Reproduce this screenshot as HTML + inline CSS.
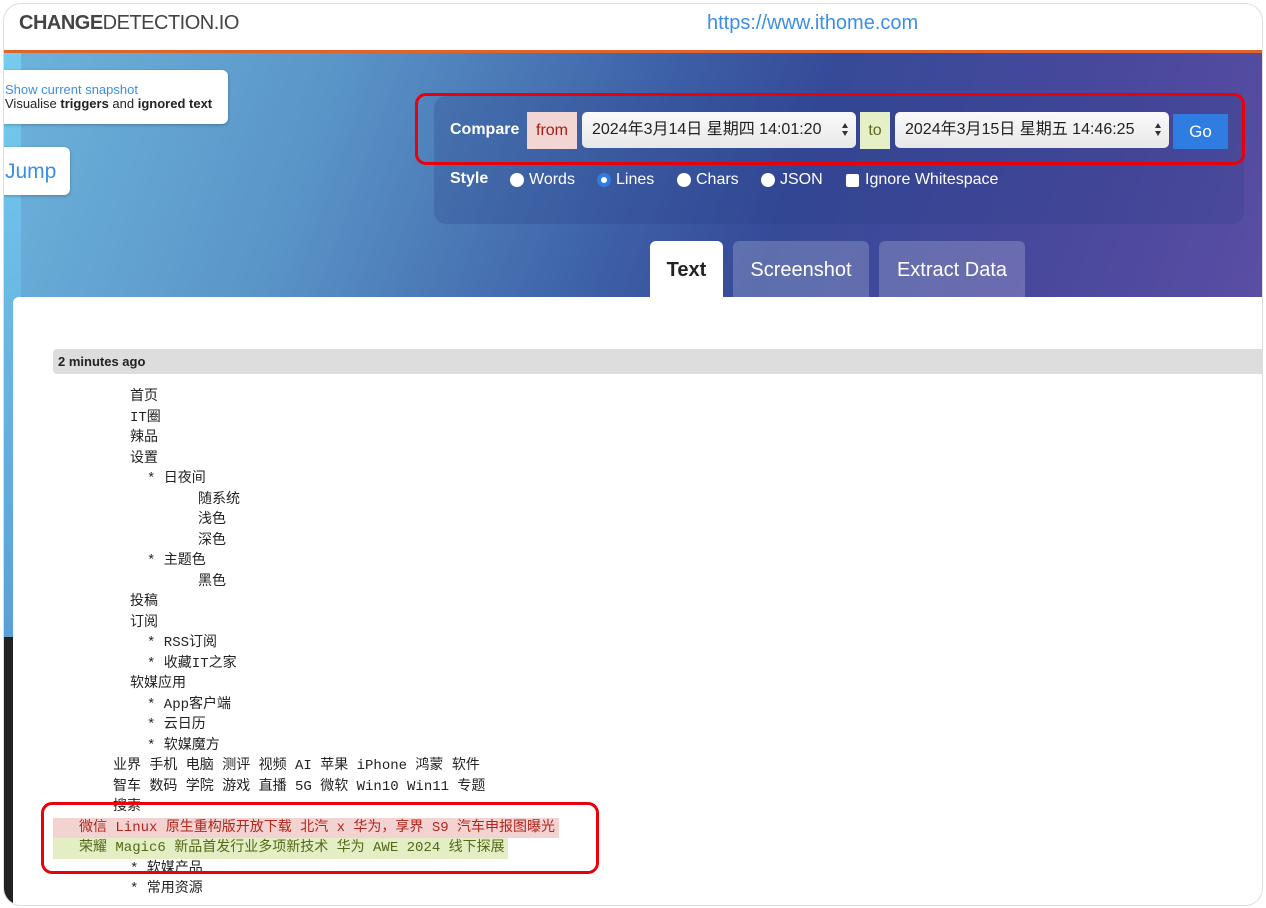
<!DOCTYPE html>
<html><head><meta charset="utf-8"><style>
*{box-sizing:border-box;margin:0;padding:0}
html,body{width:1266px;height:908px;overflow:hidden;background:#fff}
body{font-family:"Liberation Sans","Noto Sans CJK SC",sans-serif;position:relative}
.frame{position:absolute;left:3px;top:3px;width:1260px;height:903px;border-radius:18px;overflow:hidden;border:1px solid #ddd;background:#fff}
.abs{position:absolute}
.hdr{left:0;top:0;width:100%;height:47px;background:#fff}
.orange{left:0;top:46px;width:100%;height:3px;background:#e0632a}
.grad{left:0;top:49px;width:100%;height:260px;background:linear-gradient(110deg,#6db4dc 0%,#5a95c8 25%,#3d5fa6 50%,#364a98 62%,#48489c 82%,#5a4ea4 100%)}
.strip{left:0;top:49px;width:17px;height:585px;background:linear-gradient(180deg,#76cbee,#5aa0d6)}
.dark{left:0;top:633px;width:9px;height:280px;background:#222}
.card{background:#fff;border-radius:6px;box-shadow:0 1px 3px rgba(0,0,0,.25)}
.mono{font-family:"Liberation Mono","Noto Sans CJK SC",monospace;font-size:14px;color:#222;line-height:20.5px}
.mono div{white-space:pre;height:20.5px}
.sel{background:linear-gradient(#fafafa,#e8e8e8);border-radius:5px;height:36px;font-size:16px;color:#222;line-height:36px;padding-left:10px}
.arr{position:absolute;right:8px;top:10px;width:6px;height:16px}
.arr:before{content:"";position:absolute;left:0;top:1px;border-left:3px solid transparent;border-right:3px solid transparent;border-bottom:5px solid #333}
.arr:after{content:"";position:absolute;left:0;top:9px;border-left:3px solid transparent;border-right:3px solid transparent;border-top:5px solid #333}
.rad{position:absolute;width:14px;height:14px;border-radius:50%;background:#fff}
.lbl{position:absolute;font-size:16px;color:#fff}
.ann{border:3px solid #e8000a;border-radius:11px}
</style></head><body>
<div class="frame">
<div class="abs hdr"></div>
<div class="abs" style="left:15px;top:8px;font-size:20px;color:#444;letter-spacing:-0.5px"><b>CHANGE</b>DETECTION.IO</div>
<div class="abs" style="left:703px;top:8px;font-size:20px;color:#3c8ee6">https://www.ithome.com</div>
<div class="abs orange"></div>
<div class="abs grad"></div>
<div class="abs strip"></div>
<div class="abs dark"></div>

<div class="abs card" style="left:-6px;top:66px;width:230px;height:54px"></div>
<div class="abs" style="left:1px;top:78px;font-size:13px;color:#3c8ee6">Show current snapshot</div>
<div class="abs" style="left:1px;top:92px;font-size:13px;color:#222">Visualise <b>triggers</b> and <b>ignored text</b></div>
<div class="abs card" style="left:-6px;top:143px;width:72px;height:48px"></div>
<div class="abs" style="left:1px;top:156px;font-size:21px;color:#3c8ee6">Jump</div>

<div class="abs" style="left:430px;top:92px;width:810px;height:128px;background:rgba(40,60,130,.25);border-radius:12px"></div>
<div class="abs" style="left:446px;top:117px;font-size:16px;font-weight:bold;color:#fff">Compare</div>
<div class="abs" style="left:523px;top:108px;width:50px;height:37px;background:#f2d6d4;color:#a61b12;font-size:16px;line-height:37px;text-align:center">from</div>
<div class="abs sel" style="left:578px;top:108px;width:274px">2024年3月14日 星期四 14:01:20<span class="arr"></span></div>
<div class="abs" style="left:856px;top:108px;width:30px;height:37px;background:#e6f0c6;color:#5a6b1a;font-size:16px;line-height:37px;text-align:center">to</div>
<div class="abs sel" style="left:891px;top:108px;width:274px">2024年3月15日 星期五 14:46:25<span class="arr"></span></div>
<div class="abs" style="left:1169px;top:110px;width:55px;height:35px;background:#2f7de1;color:#fff;font-size:17px;line-height:35px;text-align:center">Go</div>

<div class="lbl" style="left:446px;top:166px;font-weight:bold">Style</div>
<span class="rad" style="left:506px;top:169px"></span><div class="lbl" style="left:525px;top:167px">Words</div>
<span class="rad" style="left:593px;top:169px;background:#fff;border:4px solid #2f7de1"></span><div class="lbl" style="left:612px;top:167px">Lines</div>
<span class="rad" style="left:673px;top:169px"></span><div class="lbl" style="left:692px;top:167px">Chars</div>
<span class="rad" style="left:757px;top:169px"></span><div class="lbl" style="left:776px;top:167px">JSON</div>
<span class="rad" style="left:842px;top:170px;border-radius:2px;width:13px;height:13px"></span><div class="lbl" style="left:861px;top:167px">Ignore Whitespace</div>
<div class="abs ann" style="left:411px;top:89px;width:830px;height:72px"></div>

<div class="abs" style="left:646px;top:237px;width:73px;height:60px;background:#fff;border-radius:6px 6px 0 0;font-size:20px;font-weight:bold;color:#222;text-align:center;line-height:58px">Text</div>
<div class="abs" style="left:729px;top:237px;width:136px;height:60px;background:rgba(255,255,255,.2);border-radius:6px 6px 0 0;font-size:20px;color:#fff;text-align:center;line-height:58px">Screenshot</div>
<div class="abs" style="left:875px;top:237px;width:146px;height:60px;background:rgba(255,255,255,.2);border-radius:6px 6px 0 0;font-size:20px;color:#fff;text-align:center;line-height:58px">Extract Data</div>

<div class="abs" style="left:9px;top:293px;width:1260px;height:620px;background:#fff;border-radius:6px 0 0 0"></div>
<div class="abs" style="left:49px;top:345px;width:1220px;height:25px;background:#ddd;border-radius:4px 0 0 4px;font-size:13px;font-weight:bold;color:#222;line-height:25px;padding-left:5px">2 minutes ago</div>

<div class="abs mono" style="left:0;top:383px"><div style="padding-left:126px">首页</div><div style="padding-left:126px">IT圈</div><div style="padding-left:126px">辣品</div><div style="padding-left:126px">设置</div><div style="padding-left:143px">* 日夜间</div><div style="padding-left:194px">随系统</div><div style="padding-left:194px">浅色</div><div style="padding-left:194px">深色</div><div style="padding-left:143px">* 主题色</div><div style="padding-left:194px">黑色</div><div style="padding-left:126px">投稿</div><div style="padding-left:126px">订阅</div><div style="padding-left:143px">* RSS订阅</div><div style="padding-left:143px">* 收藏IT之家</div><div style="padding-left:126px">软媒应用</div><div style="padding-left:143px">* App客户端</div><div style="padding-left:143px">* 云日历</div><div style="padding-left:143px">* 软媒魔方</div><div style="padding-left:109px">业界 手机 电脑 测评 视频 AI 苹果 iPhone 鸿蒙 软件</div><div style="padding-left:109px">智车 数码 学院 游戏 直播 5G 微软 Win10 Win11 专题</div><div style="padding-left:109px">搜索</div><div style="margin-left:49px;width:506px;background:#f3d3d1;color:#b0261e;padding-left:26px">微信 Linux 原生重构版开放下载 北汽 x 华为，享界 S9 汽车申报图曝光</div><div style="margin-left:49px;width:455px;background:#e4eec4;color:#56671a;padding-left:26px">荣耀 Magic6 新品首发行业多项新技术 华为 AWE 2024 线下探展</div><div style="padding-left:126px">* 软媒产品</div><div style="padding-left:126px">* 常用资源</div></div>
<div class="abs ann" style="left:37px;top:798px;width:558px;height:72px"></div>
</div>
</body></html>
